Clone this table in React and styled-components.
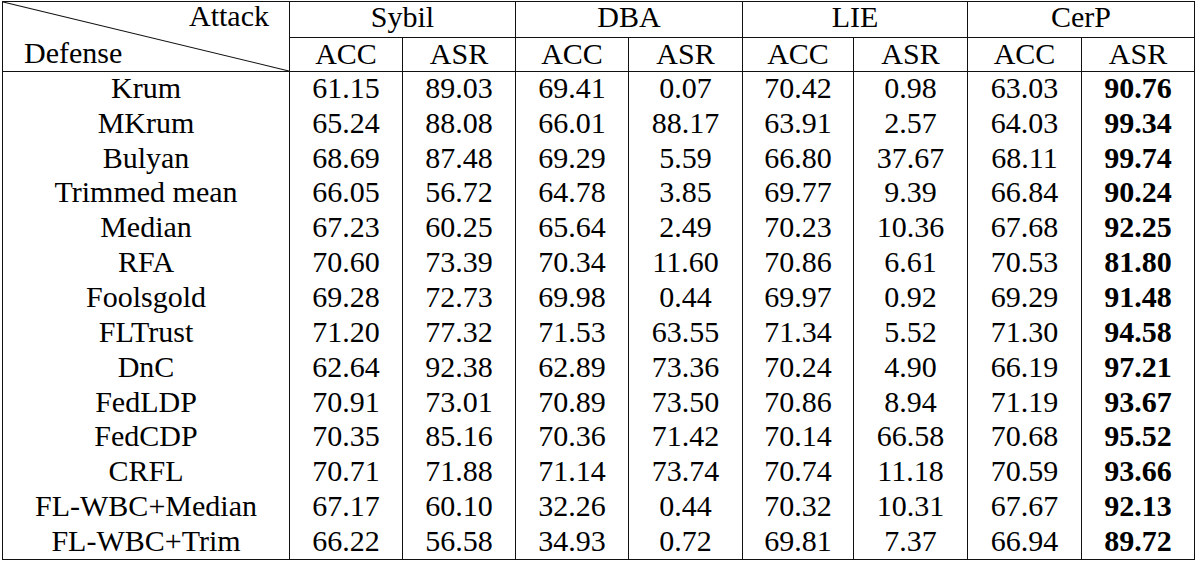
import React from 'react';
import styled, { createGlobalStyle } from 'styled-components';

const serif = `"Liberation Serif", "Times New Roman", Times, serif`;

const GlobalStyle = createGlobalStyle`
  html, body {
    margin: 0;
    padding: 0;
    background: #fff;
  }
  body, table, th, td {
    font-family: ${serif};
    color: #000;
  }
`;

const Page = styled.div`
  padding: 1px 0 0 2px;
`;

const Table = styled.table`
  border-collapse: collapse;
  table-layout: fixed;
  width: 1192px;
  font-family: ${serif};
  font-size: 30px;
  border: 1px solid #111;
`;

const HeadRow = styled.tr`
  height: ${(p) => p.$h}px;
`;

const BodyRow = styled.tr`
  height: 34.85px;
`;

const CornerCell = styled.th`
  position: relative;
  padding: 0;
  font-family: ${serif};
  font-weight: normal;
  border: 1px solid #111;
  vertical-align: top;
`;

const CornerInner = styled.div`
  display: flex;
  flex-direction: column;
  justify-content: space-between;
  height: 69px;
  line-height: 34px;
`;

const AttackLabel = styled.span`
  align-self: flex-end;
  padding-right: 20px;
  margin-top: -3px;
`;

const DefenseLabel = styled.span`
  align-self: flex-start;
  padding-left: 21px;
  margin-bottom: 1px;
`;

const Diagonal = styled.svg`
  position: absolute;
  inset: 0;
  width: 100%;
  height: 100%;
  pointer-events: none;
`;

const GroupCell = styled.th`
  font-family: ${serif};
  font-weight: normal;
  padding: 0 0 5px;
  line-height: 30px;
  text-align: center;
  border: 1px solid #111;
`;

const MetricCell = styled.th`
  font-family: ${serif};
  font-weight: normal;
  padding: 0 0 1px;
  line-height: 30px;
  text-align: center;
  border-left: 1px solid #111;
  border-right: 1px solid #111;
`;

const NameCell = styled.td`
  font-family: ${serif};
  text-align: center;
  padding: 0 0 2px;
  line-height: 30px;
  border-right: 1px solid #111;
  white-space: nowrap;
`;

const ValueCell = styled.td`
  font-family: ${serif};
  text-align: center;
  padding: 0 0 2px;
  line-height: 30px;
  border-left: 1px solid #111;
  border-right: 1px solid #111;
  font-weight: ${(p) => (p.$bold ? 'bold' : 'normal')};
`;

const attacks = ['Sybil', 'DBA', 'LIE', 'CerP'];
const widths = [287, 113, 113, 113, 114, 111, 114, 114, 113];

const rows = [
  ['Krum', '61.15', '89.03', '69.41', '0.07', '70.42', '0.98', '63.03', '90.76'],
  ['MKrum', '65.24', '88.08', '66.01', '88.17', '63.91', '2.57', '64.03', '99.34'],
  ['Bulyan', '68.69', '87.48', '69.29', '5.59', '66.80', '37.67', '68.11', '99.74'],
  ['Trimmed mean', '66.05', '56.72', '64.78', '3.85', '69.77', '9.39', '66.84', '90.24'],
  ['Median', '67.23', '60.25', '65.64', '2.49', '70.23', '10.36', '67.68', '92.25'],
  ['RFA', '70.60', '73.39', '70.34', '11.60', '70.86', '6.61', '70.53', '81.80'],
  ['Foolsgold', '69.28', '72.73', '69.98', '0.44', '69.97', '0.92', '69.29', '91.48'],
  ['FLTrust', '71.20', '77.32', '71.53', '63.55', '71.34', '5.52', '71.30', '94.58'],
  ['DnC', '62.64', '92.38', '62.89', '73.36', '70.24', '4.90', '66.19', '97.21'],
  ['FedLDP', '70.91', '73.01', '70.89', '73.50', '70.86', '8.94', '71.19', '93.67'],
  ['FedCDP', '70.35', '85.16', '70.36', '71.42', '70.14', '66.58', '70.68', '95.52'],
  ['CRFL', '70.71', '71.88', '71.14', '73.74', '70.74', '11.18', '70.59', '93.66'],
  ['FL-WBC+Median', '67.17', '60.10', '32.26', '0.44', '70.32', '10.31', '67.67', '92.13'],
  ['FL-WBC+Trim', '66.22', '56.58', '34.93', '0.72', '69.81', '7.37', '66.94', '89.72'],
];

export default function App() {
  return (
    <Page>
      <GlobalStyle />
      <Table>
        <colgroup>
          {widths.map((w, i) => (
            <col key={i} style={{ width: w }} />
          ))}
        </colgroup>
        <thead>
          <HeadRow $h={36}>
            <CornerCell rowSpan={2}>
              <Diagonal viewBox="0 0 100 100" preserveAspectRatio="none">
                <line x1="0" y1="0" x2="100" y2="100" stroke="#111" strokeWidth="1.1" vectorEffect="non-scaling-stroke" />
              </Diagonal>
              <CornerInner>
                <AttackLabel>Attack</AttackLabel>
                <DefenseLabel>Defense</DefenseLabel>
              </CornerInner>
            </CornerCell>
            {attacks.map((a) => (
              <GroupCell key={a} colSpan={2}>{a}</GroupCell>
            ))}
          </HeadRow>
          <HeadRow $h={34}>
            {attacks.map((a) => (
              <React.Fragment key={a}>
                <MetricCell>ACC</MetricCell>
                <MetricCell>ASR</MetricCell>
              </React.Fragment>
            ))}
          </HeadRow>
        </thead>
        <tbody style={{ borderTop: '1px solid #111' }}>
          {rows.map((r) => (
            <BodyRow key={r[0]}>
              <NameCell>{r[0]}</NameCell>
              {r.slice(1).map((v, i) => (
                <ValueCell key={i} $bold={i === 7}>{v}</ValueCell>
              ))}
            </BodyRow>
          ))}
        </tbody>
      </Table>
    </Page>
  );
}
